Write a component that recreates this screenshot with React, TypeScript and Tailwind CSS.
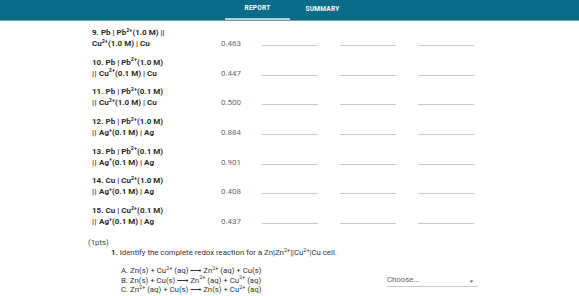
import React from 'react';

const ROWS: { n: number; a: React.ReactNode; b: React.ReactNode; v: string }[] = [
  { n: 9, a: <>Pb | Pb<sup>2+</sup>(1.0 M) ||</>, b: <>Cu<sup>2+</sup>(1.0 M) | Cu</>, v: '0.463' },
  { n: 10, a: <>Pb | Pb<sup>2+</sup>(1.0 M)</>, b: <><span className="tracking-[0.5px]">||</span> Cu<sup>2+</sup>(0.1 M) | Cu</>, v: '0.447' },
  { n: 11, a: <>Pb | Pb<sup>2+</sup>(0.1 M)</>, b: <><span className="tracking-[0.5px]">||</span> Cu<sup>2+</sup>(1.0 M) | Cu</>, v: '0.500' },
  { n: 12, a: <>Pb | Pb<sup>2+</sup>(1.0 M)</>, b: <><span className="tracking-[0.5px]">||</span> Ag<sup>+</sup>(0.1 M) | Ag</>, v: '0.884' },
  { n: 13, a: <>Pb | Pb<sup>2+</sup>(0.1 M)</>, b: <><span className="tracking-[0.5px]">||</span> Ag<sup>+</sup>(0.1 M) | Ag</>, v: '0.901' },
  { n: 14, a: <>Cu | Cu<sup>2+</sup>(1.0 M)</>, b: <><span className="tracking-[0.5px]">||</span> Ag<sup>+</sup>(0.1 M) | Ag</>, v: '0.408' },
  { n: 15, a: <>Cu | Cu<sup>2+</sup>(0.1 M)</>, b: <><span className="tracking-[0.5px]">||</span> Ag<sup>+</sup>(0.1 M) | Ag</>, v: '0.437' },
];

const Blank: React.FC = () => <div className="w-[56px] border-b border-[#c9c9c9] mb-[2px]" />;

const App: React.FC = () => {
  return (
    <div className="w-[579px] h-[296px] overflow-hidden bg-white font-['Roboto',sans-serif] [&_sup]:text-[5.5px] [&_sup]:top-[-0.6em]">
      <header className="h-[21px] bg-[#0b6c89] border-b border-[#7f9aa4] flex justify-center pl-[1px]">
        <div className="flex">
          <div className="w-[65px] flex items-center justify-center text-white text-[6.5px] font-bold tracking-[0.04em] border-b-2 border-[#b4cfd8]">
            REPORT
          </div>
          <div className="w-[65px] flex items-center justify-center text-white text-[6.5px] font-bold tracking-[0.04em]">
            SUMMARY
          </div>
        </div>
      </header>

      <div className="pl-[92px] pt-[6px]">
        {ROWS.map((r) => (
          <div key={r.n} className="flex items-end h-[22px] mb-[7.7px] text-[8px]">
            <div className="w-[129px] font-bold text-[#2b2b2b] leading-[11px]">
              <div>{r.n}. {r.a}</div>
              <div>{r.b}</div>
            </div>
            <div className="w-[41px] text-[#6b6b6b] leading-[11px]">{r.v}</div>
            <div className="flex gap-[22px] mb-[1px]">
              <Blank />
              <Blank />
              <Blank />
            </div>
          </div>
        ))}
      </div>

      <div className="pl-[88px] mt-[11px] text-[7.8px] text-[#444]">
        <div className="leading-[10px]">(1pts)</div>
        <div className="pl-[23px] text-[#333] leading-[10px]">
          <span className="font-bold">1.</span> Identify the complete redox reaction for a Zn|Zn<sup>2+</sup>||Cu<sup>2+</sup>|Cu cell.
        </div>
        <div className="flex mt-[8px] pl-[33px]">
          <div className="w-[266px] leading-[9.5px] text-[#333]">
            <div>A. Zn(s) + Cu<sup>2+</sup> (aq) ⟶ Zn<sup>2+</sup> (aq) + Cu(s)</div>
            <div>B. Zn(s) + Cu(s) ⟶ Zn<sup>2+</sup> (aq) + Cu<sup>2+</sup> (aq)</div>
            <div>C. Zn<sup>2+</sup> (aq) + Cu(s) ⟶ Zn(s) + Cu<sup>2+</sup> (aq)</div>
          </div>
          <div className="mt-[8px] w-[91px] h-[13px] border-b border-[#c9c9c9] flex items-center justify-between text-[#666]">
            <span>Choose...</span>
            <svg width="5" height="3" viewBox="0 0 6 4" className="mr-[4px] mt-[2px]">
              <path d="M0.5 0.5 L5.5 0.5 L3 3.5 Z" fill="#666" />
            </svg>
          </div>
        </div>
      </div>
    </div>
  );
};

export default App;
